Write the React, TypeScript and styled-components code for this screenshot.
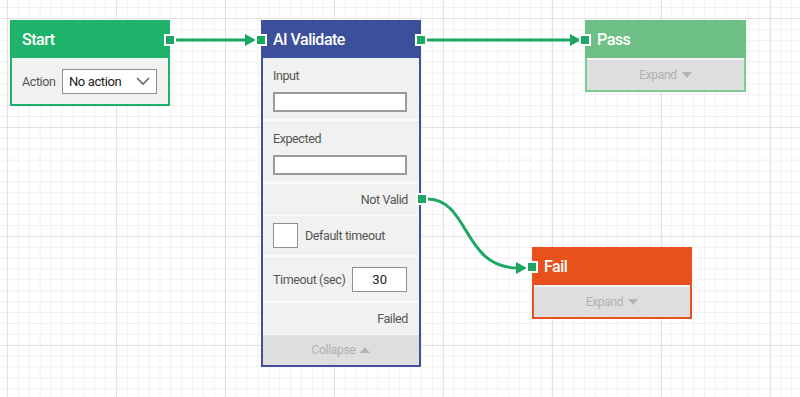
import styled, { createGlobalStyle } from 'styled-components'

const GlobalStyle = createGlobalStyle`
  html, body {
    margin: 0;
    padding: 0;
  }
  body {
    font-family: Roboto, "Liberation Sans", sans-serif;
    background: #fff;
  }
  * {
    box-sizing: border-box;
  }
`

const GREEN = '#1ca862'

const nodeColors = {
  start: { head: '#1eb36a', border: '#1eb36a' },
  validate: { head: '#3c4f9b', border: '#42509d' },
  pass: { head: '#6dbf86', border: '#7fcb95' },
  fail: { head: '#e9511c', border: '#e9511c' },
}

type Kind = keyof typeof nodeColors

const Caret = ({ up }: { up?: boolean }) => (
  <svg width="10" height="6" viewBox="0 0 10 6">
    <polygon points={up ? '0,6 5,0 10,6' : '0,0 10,0 5,6'} fill="#b4b4b4" />
  </svg>
)

const App = () => {
  return (
    <>
      <GlobalStyle />
      <StyledCanvas>
        <StyledEdges width="800" height="397">
          <line x1="175" y1="40" x2="247" y2="40" stroke={GREEN} strokeWidth="3" />
          <polygon points="245,34 256,40 245,46" fill={GREEN} />
          <line x1="427" y1="40" x2="572" y2="40" stroke={GREEN} strokeWidth="3" />
          <polygon points="570,34 581,40 570,46" fill={GREEN} />
          <path
            d="M427 199 C 470 199, 462 268, 518 268"
            fill="none"
            stroke={GREEN}
            strokeWidth="3"
          />
          <polygon points="516,262 527,268 516,274" fill={GREEN} />
        </StyledEdges>

        <StyledNode kind="start" style={{ left: 10, top: 20 }}>
          <StyledHeader kind="start">Start</StyledHeader>
          <StyledPort side="right" />
          <StyledActionRow>
            <StyledLabel>Action</StyledLabel>
            <StyledSelect>
              No action
              <svg width="14" height="9" viewBox="0 0 14 9">
                <polyline points="1,1 7,7 13,1" fill="none" stroke="#666" strokeWidth="1.6" />
              </svg>
            </StyledSelect>
          </StyledActionRow>
        </StyledNode>

        <StyledNode kind="validate" style={{ left: 261, top: 20 }}>
          <StyledHeader kind="validate">AI Validate</StyledHeader>
          <StyledPort side="left" />
          <StyledPort side="right" />
          <StyledFieldRow>
            <StyledLabel>Input</StyledLabel>
            <StyledInput />
          </StyledFieldRow>
          <StyledFieldRow>
            <StyledLabel>Expected</StyledLabel>
            <StyledInput />
          </StyledFieldRow>
          <StyledOutputRow>
            Not Valid
            <StyledPort side="right" />
          </StyledOutputRow>
          <StyledInlineRow height={41} justify="flex-start">
            <StyledCheckbox />
            <StyledLabel>Default timeout</StyledLabel>
          </StyledInlineRow>
          <StyledInlineRow height={46} justify="space-between">
            <StyledLabel>Timeout (sec)</StyledLabel>
            <StyledNumber>30</StyledNumber>
          </StyledInlineRow>
          <StyledOutputRow>Failed</StyledOutputRow>
          <StyledToggle>
            Collapse
            <Caret up />
          </StyledToggle>
        </StyledNode>

        <StyledNode kind="pass" style={{ left: 585, top: 20, width: 161 }}>
          <StyledHeader kind="pass">Pass</StyledHeader>
          <StyledPort side="left" />
          <StyledToggle gap>
            Expand
            <Caret />
          </StyledToggle>
        </StyledNode>

        <StyledNode kind="fail" style={{ left: 532, top: 247 }}>
          <StyledHeader kind="fail">Fail</StyledHeader>
          <StyledPort side="left" />
          <StyledToggle gap>
            Expand
            <Caret />
          </StyledToggle>
        </StyledNode>
      </StyledCanvas>
    </>
  )
}

export default App

const StyledCanvas = styled.div`
  position: relative;
  width: 800px;
  height: 397px;
  overflow: hidden;
  background-color: #fff;
  background-image: linear-gradient(#e2e2e2 1px, transparent 1px),
    linear-gradient(90deg, #e2e2e2 1px, transparent 1px),
    linear-gradient(#f1f1f1 1px, transparent 1px),
    linear-gradient(90deg, #f1f1f1 1px, transparent 1px);
  background-size: 109px 109px, 109px 109px, 10.9px 10.9px, 10.9px 10.9px;
  background-position: 7px 18px, 7px 18px, 7px 18px, 7px 18px;
`

const StyledEdges = styled.svg`
  position: absolute;
  left: 0;
  top: 0;
  pointer-events: none;
`

const StyledNode = styled.div<{ kind: Kind }>`
  position: absolute;
  width: 160px;
  display: flex;
  flex-direction: column;
  background: #f1f1f1;
  border: 2px solid ${(p) => nodeColors[p.kind].border};
  border-top: none;
`

const StyledHeader = styled.div<{ kind: Kind }>`
  height: 38px;
  margin: 0 -2px;
  padding: 0 12px;
  display: flex;
  align-items: center;
  background: ${(p) => nodeColors[p.kind].head};
  color: #fff;
  font-size: 16px;
  font-weight: 500;
  letter-spacing: -0.5px;
`

const StyledPort = styled.div<{ side: 'left' | 'right' }>`
  position: absolute;
  top: 14px;
  ${(p) => (p.side === 'left' ? 'left: -8px;' : 'right: -8px;')}
  width: 12px;
  height: 12px;
  background: ${GREEN};
  border: 2px solid #fff;
`

const StyledLabel = styled.span`
  font-size: 12.5px;
  line-height: 15px;
  letter-spacing: -0.4px;
  color: #555;
  white-space: nowrap;
`

const StyledActionRow = styled.div`
  height: 46px;
  padding: 0 11px 0 10px;
  display: flex;
  align-items: center;
  justify-content: space-between;
`

const StyledSelect = styled.div`
  width: 95px;
  height: 25px;
  padding: 0 6px;
  display: flex;
  align-items: center;
  justify-content: space-between;
  background: #fff;
  border: 1px solid #8f8f8f;
  font-size: 13px;
  letter-spacing: -0.4px;
  color: #222;
`

const StyledFieldRow = styled.div`
  padding: 10px 12px 7px 10px;
  display: flex;
  flex-direction: column;
  gap: 9px;
  border-bottom: 2px solid #fafafa;
`

const StyledInput = styled.div`
  height: 20px;
  background: #fff;
  border: 2px solid #9a9a9a;
`

const StyledOutputRow = styled.div`
  position: relative;
  height: 32px;
  padding: 0 11px;
  display: flex;
  align-items: center;
  justify-content: flex-end;
  font-size: 12.5px;
  letter-spacing: -0.4px;
  color: #555;
  border-bottom: 1px solid #fafafa;

  ${StyledPort} {
    top: 9px;
    right: -9px;
  }
`

const StyledInlineRow = styled.div<{ height: number; justify: string }>`
  height: ${(p) => p.height}px;
  padding: 0 12px 0 10px;
  display: flex;
  align-items: center;
  justify-content: ${(p) => p.justify};
  gap: 7px;
  border-bottom: 2px solid #fafafa;
`

const StyledCheckbox = styled.div`
  width: 25px;
  height: 25px;
  background: #fff;
  border: 1px solid #8f8f8f;
`

const StyledNumber = styled.div`
  width: 55px;
  height: 25px;
  display: flex;
  align-items: center;
  justify-content: center;
  background: #fff;
  border: 1px solid #8f8f8f;
  font-size: 13px;
  color: #222;
`

const StyledToggle = styled.div<{ gap?: boolean }>`
  height: 30px;
  display: flex;
  align-items: center;
  justify-content: center;
  gap: 5px;
  background: #dedede;
  font-size: 12px;
  letter-spacing: -0.3px;
  color: #b0b0b0;
  ${(p) => (p.gap ? 'border-top: 2px solid #f4f4f4; height: 32px;' : '')}
`
